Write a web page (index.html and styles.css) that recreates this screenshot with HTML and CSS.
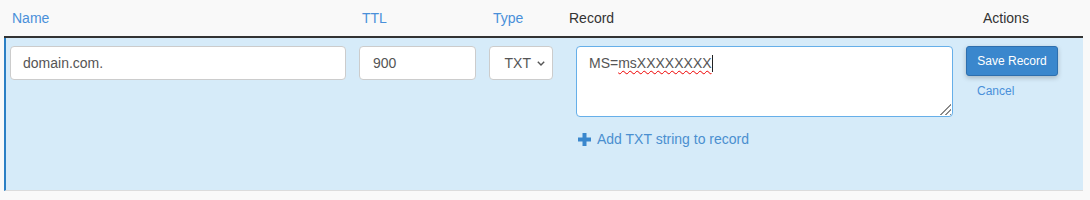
FILE: index.html
```html
<!DOCTYPE html>
<html>
<head>
<meta charset="utf-8">
<link rel="stylesheet" href="styles.css">
</head>
<body>
<div class="records">
  <div class="head">
    <div class="hcell"><a class="sort">Name</a></div>
    <div class="hcell"><a class="sort">TTL</a></div>
    <div class="hcell"><a class="sort">Type</a></div>
    <div class="hcell">Record</div>
    <div class="hcell">Actions</div>
  </div>
  <div class="row">
    <div class="cell c-name"><div class="input w-name">domain.com.</div></div>
    <div class="cell c-ttl"><div class="input w-ttl">900</div></div>
    <div class="cell c-type">
      <div class="select">TXT
        <svg class="chev" width="8" height="5" viewBox="0 0 8 5"><path d="M0.8 0.8 L4 4 L7.2 0.8" fill="none" stroke="#555" stroke-width="1.4"/></svg>
      </div>
    </div>
    <div class="cell c-record">
      <div class="textarea">MS=<span class="spell">msXXXXXXXX</span><span class="caret"></span><span class="grip"></span></div>
      <a class="add">
        <svg class="plus" width="13" height="13" viewBox="0 0 13 13"><rect x="4.5" y="0" width="4" height="13" fill="#3a87cd"/><rect x="0" y="4.5" width="13" height="4" fill="#3a87cd"/></svg>
        Add TXT string to record
      </a>
    </div>
    <div class="cell c-actions">
      <button class="btn-save">Save Record</button>
      <a class="cancel">Cancel</a>
    </div>
  </div>
</div>
</body>
</html>
```

FILE: styles.css
```css
html, body {
  margin: 0;
  padding: 0;
  background: #f9f9f9;
}
body {
  font-family: "Liberation Sans", Arial, sans-serif;
  font-size: 14px;
  color: #333;
}
.records {
  margin-left: 4px;
  width: 1079px;
}
.head {
  display: grid;
  grid-template-columns: 350px 131px 76px 414px 1fr;
  height: 36px;
  line-height: 36px;
  border-bottom: 2px solid #333;
}
.hcell {
  padding-left: 8px;
  white-space: nowrap;
}
.sort {
  color: #4a90d9;
}
.row {
  display: grid;
  grid-template-columns: 348px 131px 76px 405px 1fr;
  height: 152px;
  background: #d6ebf9;
  border-left: 2px solid #2a7fc4;
  border-bottom: 1px solid #dcdcdc;
}
.cell {
  padding-top: 8px;
}
.c-name { padding-left: 4px; }
.c-ttl { padding-left: 5px; }
.c-type { padding-left: 4px; }
.c-record { padding-left: 15px; }
.input {
  box-sizing: border-box;
  height: 34px;
  padding: 0 12px;
  line-height: 32px;
  background: #fff;
  border: 1px solid #ccc;
  border-radius: 4px;
  color: #555;
}
.w-name { width: 336px; }
.w-ttl { width: 117px; padding-left: 13px; }
.select {
  box-sizing: border-box;
  width: 64px;
  height: 34px;
  background: #fff;
  border: 1px solid #ccc;
  border-radius: 4px;
  color: #555;
  display: flex;
  align-items: center;
  justify-content: flex-end;
  padding-right: 7px;
  gap: 6px;
}
.chev { display: block; }
.textarea {
  position: relative;
  box-sizing: border-box;
  width: 377px;
  height: 71px;
  background: #fff;
  border: 1px solid #66afe9;
  border-radius: 4px;
  padding: 6px 12px;
  line-height: 20px;
  color: #555;
}
.spell {
  text-decoration: underline wavy #e00;
  text-decoration-thickness: 1px;
  text-underline-offset: 2px;
  text-decoration-skip-ink: none;
}
.caret {
  display: inline-block;
  width: 1px;
  height: 17px;
  background: #222;
  vertical-align: -4px;
}
.grip {
  position: absolute;
  right: 1px;
  bottom: 1px;
  width: 12px;
  height: 12px;
  background: repeating-linear-gradient(135deg, transparent 0 2px, #8a8a8a 2px 3.5px);
  clip-path: polygon(100% 0, 100% 100%, 0 100%);
}
.add {
  display: flex;
  align-items: center;
  gap: 6px;
  margin-top: 12px;
  margin-left: 2px;
  line-height: 20px;
  color: #4a8fd0;
}
.plus { display: block; }
.c-actions {
  display: flex;
  flex-direction: column;
  align-items: flex-start;
}
.btn-save {
  box-sizing: border-box;
  width: 92px;
  height: 30px;
  padding: 0;
  font-family: "Liberation Sans", Arial, sans-serif;
  font-size: 12px;
  color: #fff;
  background: #3a87cd;
  border: 1px solid #2e6fae;
  border-radius: 3px;
  box-shadow: 0 2px 5px rgba(0, 0, 0, 0.22);
}
.cancel {
  margin-top: 6px;
  margin-left: 11px;
  font-size: 12px;
  line-height: 18px;
  color: #4a90d9;
}
```
